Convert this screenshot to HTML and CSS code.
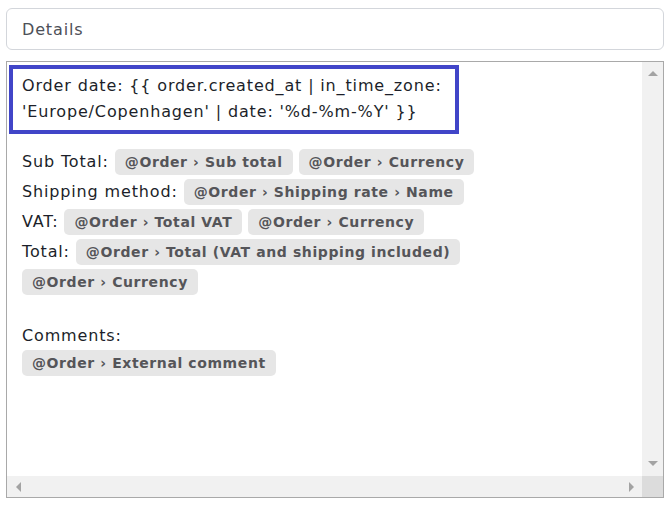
FILE: index.html
```html
<!DOCTYPE html>
<html lang="en">
<head>
<meta charset="utf-8">
<title>Details</title>
<link rel="stylesheet" href="styles.css">
</head>
<body>
<div class="page">
  <div class="field">Details</div>
  <div class="editor">
    <div class="content">
      <div class="focus">Order date: {{ order.created_at | in_time_zone:<br>'Europe/Copenhagen' | date: '%d-%m-%Y' }}</div>
      <div class="rows">
        <div class="row"><span class="label">Sub Total:</span><span class="chip">@Order › Sub total</span><span class="chip">@Order › Currency</span></div>
        <div class="row"><span class="label">Shipping method:</span><span class="chip">@Order › Shipping rate › Name</span></div>
        <div class="row"><span class="label">VAT:</span><span class="chip">@Order › Total VAT</span><span class="chip">@Order › Currency</span></div>
        <div class="row"><span class="label">Total:</span><span class="chip">@Order › Total (VAT and shipping included)</span><span class="chip">@Order › Currency</span></div>
      </div>
      <div class="comments">
        <div class="label line">Comments:</div>
        <div class="row"><span class="chip">@Order › External comment</span></div>
      </div>
    </div>
    <div class="vbar">
      <span class="arrow up"></span>
      <span class="arrow down"></span>
    </div>
    <div class="hbar">
      <span class="arrow left"></span>
      <span class="arrow right"></span>
    </div>
    <div class="corner"></div>
  </div>
</div>
</body>
</html>
```
FILE: styles.css
```css
* { box-sizing: border-box; }
html, body { margin: 0; padding: 0; background: #fff; }
body {
  font-family: "DejaVu Sans", "Noto Sans", sans-serif;
  font-size: 16px;
  letter-spacing: 0.85px;
  color: #1c1f2a;
}
.page {
  padding: 8px 6px 0 6px;
  width: 670px;
}
.field {
  height: 42px;
  border: 1px solid #d3d6db;
  border-radius: 6px;
  padding: 0 15px;
  display: flex;
  align-items: center;
  color: #4d5058;
  width: 658px;
}
.editor {
  margin-top: 11px;
  width: 658px;
  height: 437px;
  border: 1px solid #a9a9a9;
  display: grid;
  grid-template-columns: 1fr 21px;
  grid-template-rows: 1fr 21px;
}
.content {
  overflow: hidden;
  padding: 3px 0 0 2px;
}
.focus {
  width: 450px;
  height: 69px;
  border: 4px solid #4145c8;
  padding: 4px 0 0 9px;
  line-height: 26px;
  white-space: nowrap;
}
.rows {
  margin-top: 15px;
  padding-left: 13px;
  display: flex;
  flex-direction: column;
  gap: 4px;
}
.row {
  display: flex;
  flex-wrap: wrap;
  align-items: center;
  column-gap: 6px;
  row-gap: 4px;
}
.label {
  line-height: 26px;
}
.chip {
  display: inline-flex;
  align-items: center;
  height: 26px;
  padding: 0 10px;
  border-radius: 5px;
  background: #e6e6e6;
  color: #555559;
  font-weight: 700;
  font-size: 14px;
  letter-spacing: 0.6px;
}
.comments {
  margin-top: 28px;
  padding-left: 13px;
}
.comments .line {
  height: 26px;
  line-height: 26px;
  margin-bottom: 1px;
}
.vbar {
  background: #f1f1f1;
  display: flex;
  flex-direction: column;
  justify-content: space-between;
  align-items: center;
  padding: 9px 0 10px;
}
.hbar {
  background: #f1f1f1;
  display: flex;
  justify-content: space-between;
  align-items: center;
  padding: 0 8px 0 9px;
}
.corner { background: #dcdcdc; }
.arrow { width: 0; height: 0; display: block; }
.arrow.up {
  border-left: 5px solid transparent;
  border-right: 5px solid transparent;
  border-bottom: 5px solid #a3a3a3;
}
.arrow.down {
  border-left: 5px solid transparent;
  border-right: 5px solid transparent;
  border-top: 5px solid #a3a3a3;
}
.arrow.left {
  border-top: 5px solid transparent;
  border-bottom: 5px solid transparent;
  border-right: 5px solid #a3a3a3;
}
.arrow.right {
  border-top: 5px solid transparent;
  border-bottom: 5px solid transparent;
  border-left: 5px solid #a3a3a3;
}
```
